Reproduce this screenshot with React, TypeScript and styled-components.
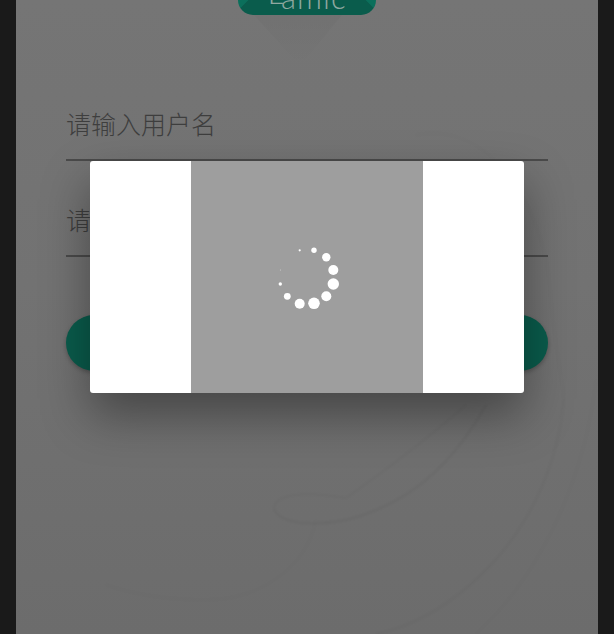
import styled, { createGlobalStyle } from "styled-components";

const GlobalStyle = createGlobalStyle`
    html, body {
        margin: 0;
        padding: 0;
        background-color: #1a1a1a;
    }
    #root {
        width: 614px;
        height: 634px;
        overflow: hidden;
    }
`;

const Screen = styled.div`
    position: relative;
    width: 614px;
    height: 634px;
    padding: 0 16px;
    box-sizing: border-box;
    overflow: hidden;
    font-family: "Noto Sans CJK SC", "Liberation Sans", sans-serif;
`;
const Page = styled.main`
    position: relative;
    height: 100%;
    padding: 0 50px;
    box-sizing: border-box;
    display: flex;
    flex-direction: column;
    background: linear-gradient(180deg, #757575 0%, #727272 45%, #6c6c6c 100%);
`;
const Swirl = styled.svg`
    position: absolute;
    left: 0;
    top: 0;
    width: 582px;
    height: 634px;
`;
const Strokes = styled.g`
    filter: blur(1.2px);
`;
const Logo = styled.div`
    position: relative;
    align-self: center;
    width: 138px;
    height: 15px;
    margin-bottom: 50px;
    flex-shrink: 0;
    overflow: hidden;
    border-radius: 0 0 15px 15px;
    background:
        linear-gradient(135deg, #0b6f5b 7px, transparent 7.5px),
        linear-gradient(225deg, #0b6f5b 7px, transparent 7.5px),
        #0a5c4c;
    display: flex;
    justify-content: center;
    align-items: flex-end;
`;
const LogoText = styled.span`
    font-family: "Lato", "Liberation Sans", sans-serif;
    font-size: 31px;
    font-weight: 300;
    line-height: 31px;
    letter-spacing: 1px;
    color: #8fa8a0;
    margin-bottom: 2px;
`;
const LogoInitial = styled.span`
    display: inline-block;
    transform: translateY(-5px);
    margin-right: -3px;
`;
const Field = styled.div`
    position: relative;
    height: 96px;
    flex-shrink: 0;
    box-sizing: border-box;
    border-bottom: 2px solid #4a4a4a;
    display: flex;
    align-items: flex-end;
    padding-bottom: 18px;
`;
const Placeholder = styled.span`
    font-size: 25px;
    font-weight: 300;
    line-height: 36px;
    color: #3e3e3e;
`;
const LoginButton = styled.div`
    position: relative;
    height: 56px;
    margin-top: 58px;
    flex-shrink: 0;
    border-radius: 28px;
    background-color: #0a5c4c;
    box-shadow: 0 2px 4px rgba(0, 0, 0, 0.25);
    display: flex;
    align-items: center;
    justify-content: center;
    font-size: 20px;
    color: #9fb5ae;
`;
const Overlay = styled.div`
    position: absolute;
    inset: 0;
    display: flex;
    align-items: center;
    justify-content: center;
    padding-bottom: 80px;
    box-sizing: border-box;
`;
const Dialog = styled.div`
    width: 434px;
    height: 232px;
    border-radius: 3px;
    background-color: #ffffff;
    box-shadow: 0 22px 48px rgba(0, 0, 0, 0.38);
    display: flex;
    justify-content: center;
`;
const SpinnerPanel = styled.div`
    width: 232px;
    height: 100%;
    background-color: #9e9e9e;
    display: flex;
    align-items: center;
    justify-content: center;
`;
const Spinner = styled.svg`
    width: 70px;
    height: 70px;
    fill: #ffffff;
`;

// offsets from the spinner centre, read off the reference
const dots = [
    { x: -7.3, y: -26.7, r: 1.1 },
    { x: 7, y: -26.7, r: 2.7 },
    { x: 19.3, y: -19.7, r: 4.2 },
    { x: 26.3, y: -7, r: 5 },
    { x: 26.3, y: 7, r: 5.7 },
    { x: 19.3, y: 19.3, r: 5 },
    { x: 7, y: 26.3, r: 5.8 },
    { x: -7.3, y: 26.7, r: 5 },
    { x: -19.7, y: 19.3, r: 3.4 },
    { x: -26.7, y: 7, r: 1.7 },
    { x: -26.7, y: -7, r: 0.4 },
];

export default function App() {
    return (
        <>
            <GlobalStyle />
            <Screen>
                <Page>
                    <Swirl viewBox="0 0 582 634" fill="none">
                        <defs>
                            <linearGradient id="logoShade" x1="0" y1="0" x2="0" y2="1">
                                <stop offset="0" stopColor="#000" stopOpacity="0.03" />
                                <stop offset="1" stopColor="#000" stopOpacity="0" />
                            </linearGradient>
                        </defs>
                        <path d="M238 15 L284 66 L326 15 Z" fill="url(#logoShade)" />
                        <Strokes stroke="#000" strokeWidth="2">
                            <path d="M258 509 C258 495 285 490 330 498 C370 470 410 440 450 405" strokeOpacity="0.025" />
                            <path d="M258 509 C265 528 320 528 360 510 C410 490 445 450 470 405" strokeOpacity="0.04" />
                            <path d="M548 400 C540 480 500 560 420 610 C400 622 380 630 360 634" strokeOpacity="0.03" />
                            <path d="M580 380 C570 470 530 570 460 634" strokeOpacity="0.015" />
                            <path d="M400 135 C470 120 530 200 535 300 C538 340 545 370 548 400" strokeOpacity="0.015" />
                            <path d="M300 520 C290 570 240 600 190 600 C150 600 120 595 90 585" strokeOpacity="0.015" />
                        </Strokes>
                    </Swirl>
                    <Logo>
                        <LogoText>
                            <LogoInitial>L</LogoInitial>amic
                        </LogoText>
                    </Logo>
                    <Field>
                        <Placeholder>请输入用户名</Placeholder>
                    </Field>
                    <Field>
                        <Placeholder>请输入密码</Placeholder>
                    </Field>
                    <LoginButton>登录</LoginButton>
                </Page>
                <Overlay>
                    <Dialog>
                        <SpinnerPanel>
                            <Spinner viewBox="-35 -35 70 70">
                                {dots.map((dot, index) => (
                                    <circle key={index} cx={dot.x} cy={dot.y} r={dot.r} />
                                ))}
                            </Spinner>
                        </SpinnerPanel>
                    </Dialog>
                </Overlay>
            </Screen>
        </>
    );
}
